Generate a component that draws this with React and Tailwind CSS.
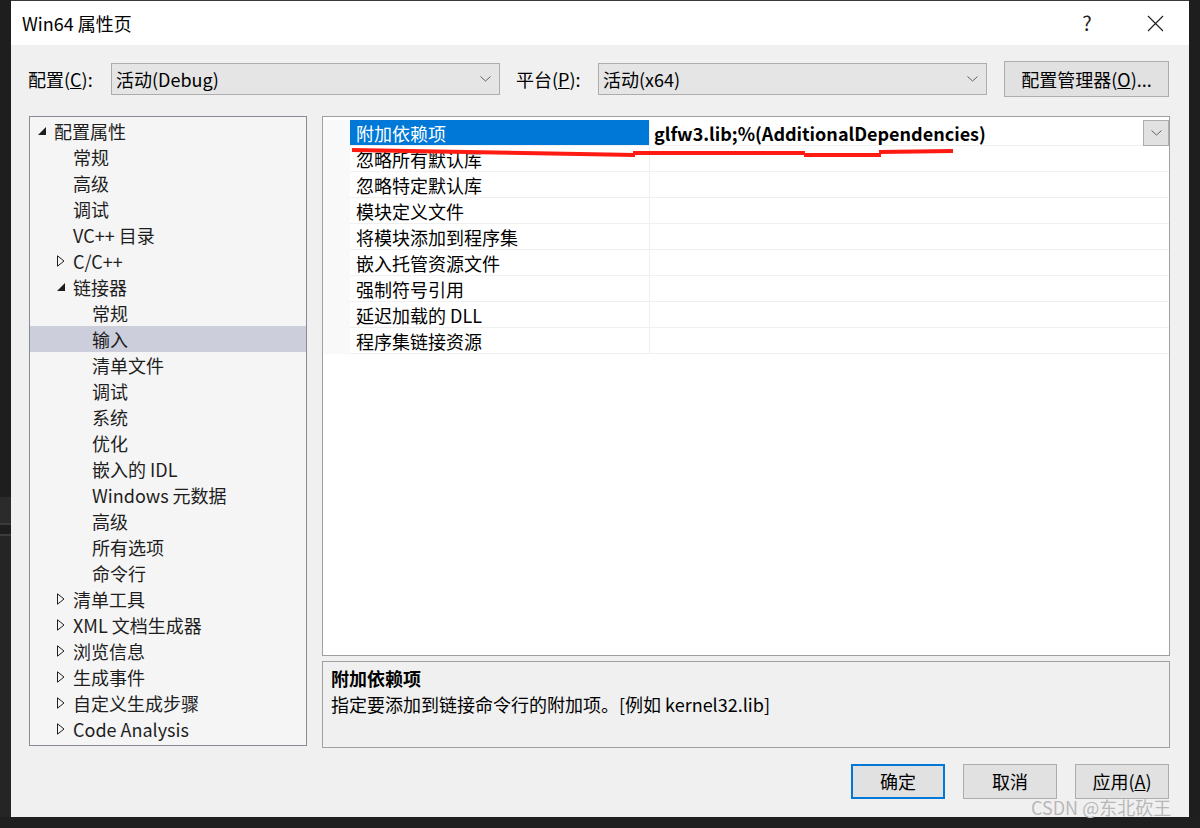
import React from "react";

const FONT = { fontFamily: '"Noto Sans CJK SC", "Noto Sans", sans-serif' };

const treeRows = [
  { l: 0, e: "open", t: "配置属性" },
  { l: 1, t: "常规" },
  { l: 1, t: "高级" },
  { l: 1, t: "调试" },
  { l: 1, t: "VC++ 目录" },
  { l: 1, e: "closed", t: "C/C++" },
  { l: 1, e: "open", t: "链接器" },
  { l: 2, t: "常规" },
  { l: 2, t: "输入", sel: true },
  { l: 2, t: "清单文件" },
  { l: 2, t: "调试" },
  { l: 2, t: "系统" },
  { l: 2, t: "优化" },
  { l: 2, t: "嵌入的 IDL" },
  { l: 2, t: "Windows 元数据" },
  { l: 2, t: "高级" },
  { l: 2, t: "所有选项" },
  { l: 2, t: "命令行" },
  { l: 1, e: "closed", t: "清单工具" },
  { l: 1, e: "closed", t: "XML 文档生成器" },
  { l: 1, e: "closed", t: "浏览信息" },
  { l: 1, e: "closed", t: "生成事件" },
  { l: 1, e: "closed", t: "自定义生成步骤" },
  { l: 1, e: "closed", t: "Code Analysis" },
];

const props = [
  "附加依赖项",
  "忽略所有默认库",
  "忽略特定默认库",
  "模块定义文件",
  "将模块添加到程序集",
  "嵌入托管资源文件",
  "强制符号引用",
  "延迟加载的 DLL",
  "程序集链接资源",
];

function Chevron() {
  return (
    <svg width="11" height="6" viewBox="0 0 11 6" className="shrink-0">
      <path d="M0.5 0.5 L5.5 5 L10.5 0.5" fill="none" stroke="#606060" strokeWidth="1" />
    </svg>
  );
}

function Expander({ e }) {
  if (e === "open")
    return (
      <svg width="10" height="10" viewBox="0 0 10 10">
        <path d="M9 1 L9 9 L1 9 Z" fill="#1e1e1e" />
      </svg>
    );
  if (e === "closed")
    return (
      <svg width="10" height="12" viewBox="0 0 10 12">
        <path d="M1.5 0.8 L8 6 L1.5 11.2 Z" fill="none" stroke="#1e1e1e" strokeWidth="1" />
      </svg>
    );
  return null;
}

function Dropdown({ text }) {
  return (
    <div className="w-[389px] h-[32px] bg-[#e5e5e5] border border-[#adadad] flex items-center justify-between pl-[4px] pr-[8px]">
      <span className="text-[18px] leading-none text-black">{text}</span>
      <Chevron />
    </div>
  );
}

function Btn({ children, primary }) {
  return (
    <div
      className={
        "w-[94px] h-[35px] bg-[#e1e1e1] flex items-center justify-center text-[18px] text-black " +
        (primary ? "border-2 border-[#0078d7]" : "border border-[#adadad]")
      }
    >
      {children}
    </div>
  );
}

export default function App() {
  return (
    <div className="w-[1200px] h-[828px] bg-[#1f1f1f] flex flex-col overflow-hidden relative" style={FONT}>
      <div className="flex h-[817px]">
        {/* left dark strip */}
        <div className="w-[11px] flex flex-col">
          <div className="h-[497px] bg-[#1e1e1e]" />
          <div className="h-[26px] bg-[#2b2b2b]" />
          <div className="h-[2px] bg-[#3a3a3a]" />
          <div className="h-[9px] bg-[#1e1e1e]" />
          <div className="h-[2px] bg-[#3c3c3c]" />
          <div className="flex-1 bg-[#252526]" />
        </div>

        {/* dialog */}
        <div className="w-[1178px] flex flex-col bg-[#f0f0f0]">
          {/* title bar */}
          <div className="h-[45px] bg-white border-t border-[#3a3a3a] flex items-center pl-[11px]">
            <span className="text-[18px] text-black flex-1">Win64 属性页</span>
            <span className="text-[20px] text-[#222] w-[24px] text-center mr-[48px]">?</span>
            <svg width="17" height="17" viewBox="0 0 17 17" className="mr-[25px]">
              <path d="M1 1 L16 16 M16 1 L1 16" stroke="#222" strokeWidth="1.2" />
            </svg>
          </div>

          {/* config row */}
          <div className="flex items-center pl-[17px] pr-[20px] mt-[16px] h-[36px]">
            <span className="text-[18px] text-black w-[83px]">
              配置(<span className="underline">C</span>):
            </span>
            <Dropdown text="活动(Debug)" />
            <span className="text-[18px] text-black ml-[16px] w-[82px]">
              平台(<span className="underline">P</span>):
            </span>
            <Dropdown text="活动(x64)" />
            <div className="ml-[17px] w-[165px] h-[36px] bg-[#e1e1e1] border border-[#adadad] flex items-center justify-center text-[18px] text-black">
              配置管理器(<span className="underline">O</span>)...
            </div>
          </div>

          {/* main */}
          <div className="flex mt-[19px] pl-[18px] pr-[19px]">
            {/* tree */}
            <div className="w-[278px] h-[630px] bg-[#f5f5f5] border border-[#868b96] pt-[1px]">
              {treeRows.map((r, i) => (
                <div
                  key={i}
                  className={"h-[26px] flex items-center text-[18px] text-[#1e1e1e] " + (r.sel ? "bg-[#cccedb]" : "")}
                  style={{ paddingLeft: 7 + 19 * r.l }}
                >
                  <span className="w-[17px] flex items-center">
                    <Expander e={r.e} />
                  </span>
                  <span className="leading-none whitespace-nowrap">{r.t}</span>
                </div>
              ))}
            </div>

            {/* right side */}
            <div className="ml-[15px] flex-1 flex flex-col">
              <div className="relative h-[540px] bg-white border border-[#a0a0a0] pt-[3px]">
                {props.map((p, i) => (
                  <div key={i} className="h-[26px] flex">
                    <div className="w-[27px] bg-[#f9f9f9]" />
                    <div
                      className={
                        "w-[300px] flex items-center pl-[6px] text-[18px] border-b border-r " +
                        (i === 0 ? "bg-[#0078d7] text-white border-[#f0f0f0]" : "text-black border-[#f0f0f0]")
                      }
                    >
                      <span className="leading-none whitespace-nowrap">{p}</span>
                    </div>
                    <div className="flex-1 flex items-center border-b border-[#f0f0f0] pl-[4px]">
                      {i === 0 && (
                        <>
                          <span className="flex-1 text-[18px] font-bold text-black leading-none whitespace-nowrap">
                            glfw3.lib;%(AdditionalDependencies)
                          </span>
                          <div className="w-[26px] h-[26px] bg-[#e1e1e1] border border-[#adadad] flex items-center justify-center">
                            <Chevron />
                          </div>
                        </>
                      )}
                    </div>
                  </div>
                ))}
                {/* red annotation underline */}
                <svg className="absolute left-0 top-0 pointer-events-none" width="848" height="60">
                  <path
                    d="M29 33 L200 36 L312 38 M310 36 L482 36 M481 38 L558 38 M556 35 L630 34"
                    fill="none"
                    stroke="#ff1a12"
                    strokeWidth="4"
                  />
                </svg>
              </div>

              <div className="mt-[5px] h-[87px] bg-[#f0f0f0] border border-[#a0a0a0] pl-[8px] pt-[4px]">
                <div className="text-[18px] font-bold text-black leading-[25px]">附加依赖项</div>
                <div className="text-[18px] text-black leading-[26px]">指定要添加到链接命令行的附加项。[例如 kernel32.lib]</div>
              </div>
            </div>
          </div>

          {/* buttons */}
          <div className="flex justify-end gap-[18px] pr-[20px] mt-[16px]">
            <Btn primary>确定</Btn>
            <Btn>取消</Btn>
            <Btn>
              应用(<span className="underline">A</span>)
            </Btn>
          </div>
        </div>

        {/* right dark strip */}
        <div className="flex-1 bg-[#1e1e1e]" />
      </div>
      <div className="flex-1 bg-[#1f1f1f]" />

      {/* watermark */}
      <div className="absolute left-[1031px] top-[798px] text-[18px] text-[#b8b8b8] leading-none whitespace-nowrap">
        CSDN @东北砍王
      </div>
    </div>
  );
}
